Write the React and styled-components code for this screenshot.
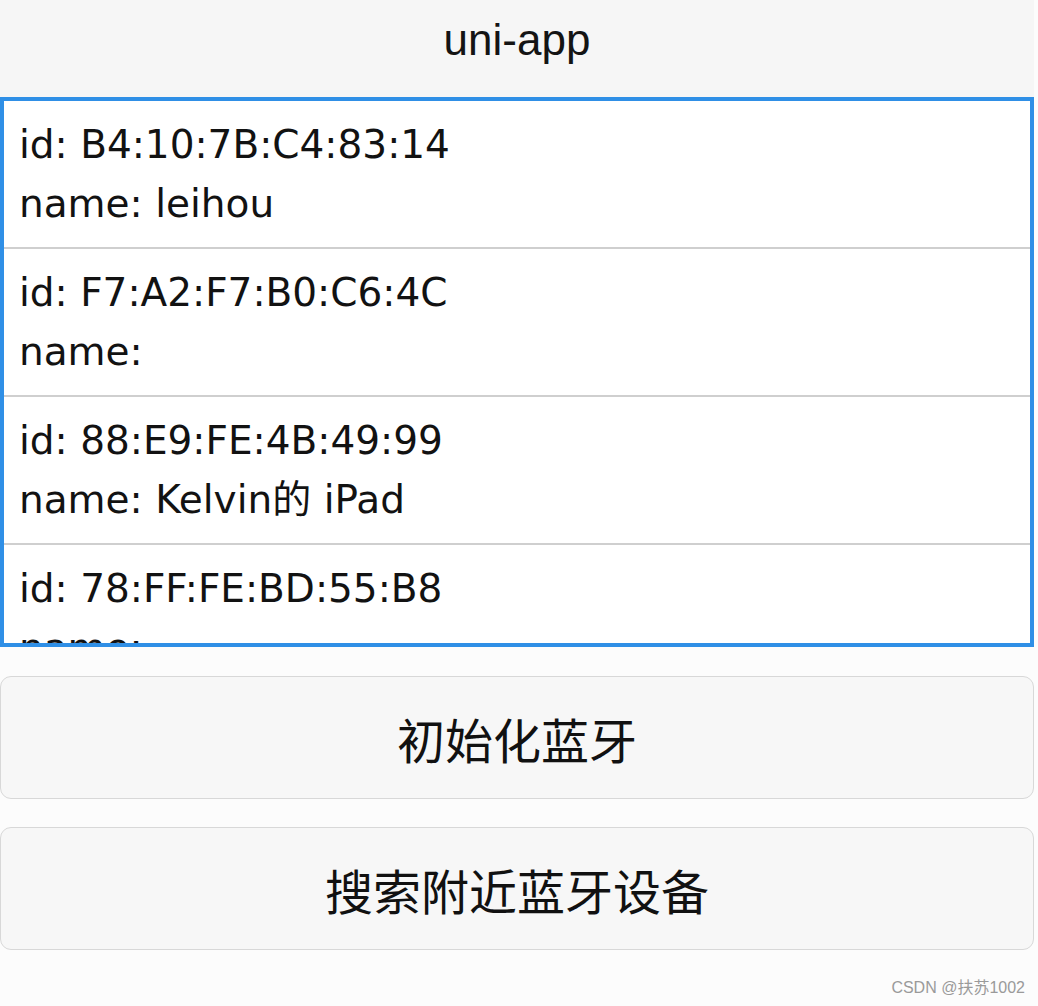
import React from 'react'
import styled, { createGlobalStyle } from 'styled-components'

const GlobalStyle = createGlobalStyle`
  html, body {
    margin: 0;
    padding: 0;
    background: #fcfcfc;
  }
  * {
    box-sizing: border-box;
  }
`

const devices = [
  { id: 'B4:10:7B:C4:83:14', name: 'leihou' },
  { id: 'F7:A2:F7:B0:C6:4C', name: '' },
  { id: '88:E9:FE:4B:49:99', name: 'Kelvin的 iPad' },
  { id: '78:FF:FE:BD:55:B8', name: '' }
]

export default function App () {
  return (
    <Page>
      <GlobalStyle />
      <Header>uni-app</Header>
      <DeviceList>
        {devices.map((d) => (
          <DeviceRow key={d.id}>
            <Line>id: {d.id}</Line>
            <Line>name: {d.name}</Line>
          </DeviceRow>
        ))}
      </DeviceList>
      <Actions>
        <ActionButton>初始化蓝牙</ActionButton>
        <ActionButton>搜索附近蓝牙设备</ActionButton>
      </Actions>
      <Watermark>CSDN @扶苏1002</Watermark>
    </Page>
  )
}

const Page = styled.div`
  position: relative;
  width: 1038px;
  height: 1006px;
  padding-right: 4px;
  overflow: hidden;
`

const Header = styled.div`
  height: 97px;
  padding-top: 1px;
  background: #f6f6f6;
  text-align: center;
  font-family: 'Liberation Sans', Arial, sans-serif;
  font-size: 44px;
  line-height: 78px;
  color: #141414;
`

const DeviceList = styled.div`
  height: 550px;
  border: 4px solid #2f8fe6;
  background: #ffffff;
  overflow: hidden;
`

const DeviceRow = styled.div`
  padding: 14px 15px;
  border-bottom: 2px solid #cfcfcf;
`

const Line = styled.div`
  font-family: 'DejaVu Sans', 'Noto Sans CJK SC', sans-serif;
  font-size: 39px;
  line-height: 59px;
  color: #121212;
  white-space: nowrap;
`

const Actions = styled.div`
  display: flex;
  flex-direction: column;
  gap: 28px;
  margin-top: 29px;
`

const ActionButton = styled.div`
  height: 123px;
  display: flex;
  align-items: center;
  justify-content: center;
  background: #f7f7f7;
  border: 1.5px solid #d8d8d8;
  border-radius: 11px;
  font-family: 'Noto Sans CJK SC', sans-serif;
  font-size: 48px;
  color: #111111;
`

const Watermark = styled.div`
  position: absolute;
  right: 13px;
  bottom: 8px;
  font-family: 'Liberation Sans', 'Noto Sans CJK SC', sans-serif;
  font-size: 16px;
  color: #9a9a9a;
`
